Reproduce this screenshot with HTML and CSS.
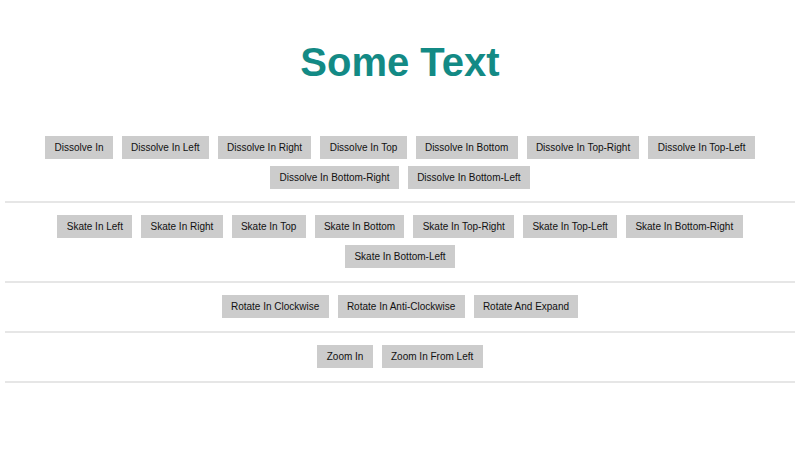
FILE: index.html
```html
<!DOCTYPE html>
<html lang="en">

<head>
    <meta charset="UTF-8">
    <meta name="viewport" content="width=device-width, initial-scale=1.0">
    <title>Some Text</title>
    <link rel="stylesheet" href="styles.css">
</head>

<body>
    <h1 class="title">Some Text</h1>

    <div class="group">
        <button class="btn">Dissolve In</button>
        <button class="btn">Dissolve In Left</button>
        <button class="btn">Dissolve In Right</button>
        <button class="btn">Dissolve In Top</button>
        <button class="btn">Dissolve In Bottom</button>
        <button class="btn">Dissolve In Top-Right</button>
        <button class="btn">Dissolve In Top-Left</button>
        <button class="btn">Dissolve In Bottom-Right</button>
        <button class="btn">Dissolve In Bottom-Left</button>
    </div>

    <div class="group">
        <button class="btn">Skate In Left</button>
        <button class="btn">Skate In Right</button>
        <button class="btn">Skate In Top</button>
        <button class="btn">Skate In Bottom</button>
        <button class="btn">Skate In Top-Right</button>
        <button class="btn">Skate In Top-Left</button>
        <button class="btn">Skate In Bottom-Right</button>
        <button class="btn">Skate In Bottom-Left</button>
    </div>

    <div class="group">
        <button class="btn">Rotate In Clockwise</button>
        <button class="btn">Rotate In Anti-Clockwise</button>
        <button class="btn">Rotate And Expand</button>
    </div>

    <div class="group">
        <button class="btn">Zoom In</button>
        <button class="btn">Zoom In From Left</button>
    </div>
</body>

</html>
```

FILE: styles.css
```css
* {
    margin: 0;
    padding: 0;
    box-sizing: border-box;
}

body {
    font-family: "Liberation Sans", Arial, sans-serif;
    background-color: #fff;
    color: #111;
}

.title {
    text-align: center;
    font-size: 40px;
    font-weight: 700;
    color: #138a85;
    padding-top: 40px;
    margin-bottom: 38px;
}

.group {
    display: flex;
    flex-wrap: wrap;
    justify-content: center;
    gap: 7px 9px;
    margin: 0 5px;
    padding: 12px 20px 13px;
    border-bottom: 2px solid #e6e6e6;
}

.group:first-of-type {
    padding-top: 13px;
    padding-bottom: 12px;
}

.btn {
    border: 0;
    height: 23px;
    line-height: 23px;
    padding: 0 9.3px;
    background-color: #cccccc;
    color: #111;
    font-family: "Liberation Sans", Arial, sans-serif;
    font-size: 10px;
    cursor: pointer;
}
```
